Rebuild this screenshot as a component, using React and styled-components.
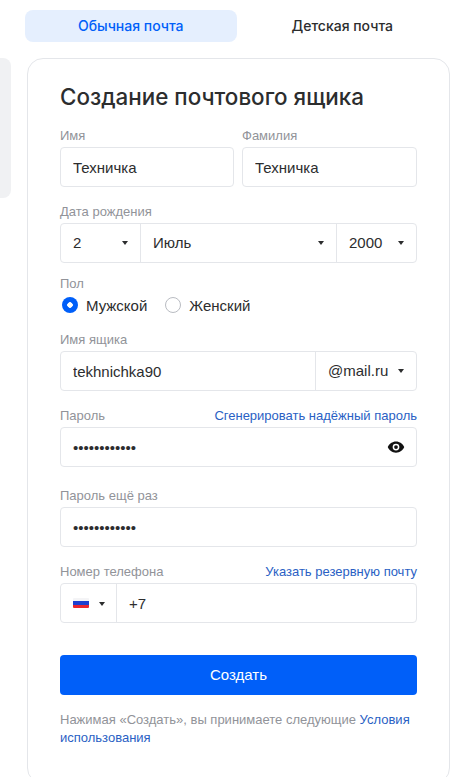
import styled, { createGlobalStyle } from 'styled-components';

const Global = createGlobalStyle`
  html, body { margin: 0; padding: 0; background: #fff; }
  body { font-family: "Liberation Sans", Arial, sans-serif; color: #2c2d2e; overflow: hidden; }
  * { box-sizing: border-box; }
`;

const Page = styled.div`
  width: 473px;
  height: 777px;
  overflow: hidden;
  padding-top: 10px;
`;

const Tabs = styled.div`
  display: flex;
  margin-left: 25px;
  width: 423px;
  height: 32px;
`;

const Tab = styled.div`
  flex: 1;
  display: flex;
  align-items: center;
  justify-content: center;
  padding-bottom: 2px;
  border-radius: 8px;
  font-family: Inter, "Noto Sans", sans-serif;
  font-size: 14px;
  font-weight: 500;
  background: ${({ $active }) => ($active ? '#e5effe' : 'transparent')};
  color: ${({ $active }) => ($active ? '#005ff9' : '#2c2d2e')};
`;

const Body = styled.div`
  display: flex;
  margin-top: 16px;
`;

const SideStub = styled.div`
  flex: none;
  width: 11px;
  height: 140px;
  background: #f0f1f3;
  border-radius: 0 8px 8px 0;
`;

const Card = styled.div`
  flex: none;
  width: 423px;
  height: 726px;
  margin-left: 16px;
  padding: 24px 32px 0;
  border: 1px solid #e4e6ea;
  border-radius: 16px;
`;

const Title = styled.h1`
  margin: 0 0 16px;
  font-family: Inter, "Noto Sans", sans-serif;
  font-size: 22.4px;
  line-height: 28px;
  font-weight: 500;
  color: #2c2d2e;
`;

const Row = styled.div`
  display: grid;
  grid-template-columns: 174px 1fr;
  gap: 8px;
`;

const Field = styled.div`
  min-width: 0;
  margin-bottom: ${({ $gap }) => $gap ?? 16}px;
`;

const LabelRow = styled.div`
  display: flex;
  justify-content: space-between;
  align-items: center;
  height: 16px;
  padding-top: 2px;
  margin-bottom: 4px;
  font-size: 13px;
  line-height: 16px;
`;

const Label = styled.span`
  color: #919399;
`;

const TextLink = styled.a`
  color: #2a5fc4;
  font-size: 13px;
`;

const Control = styled.div`
  display: flex;
  align-items: center;
  height: 40px;
  background: #fff;
  border: 1px solid #e4e6ea;
  border-radius: 4px;
`;

const Input = styled.input`
  flex: 1;
  width: 100%;
  min-width: 0;
  height: 100%;
  padding: 0 12px;
  border: 0;
  outline: 0;
  background: transparent;
  font-family: "Liberation Sans", Arial, sans-serif;
  font-size: 15px;
  color: #2c2d2e;
`;

const Select = styled.div`
  flex: ${({ $grow }) => ($grow ? 1 : 'none')};
  width: ${({ $width }) => ($width ? `${$width}px` : 'auto')};
  height: 100%;
  display: flex;
  align-items: center;
  justify-content: space-between;
  padding: 0 12px 2px;
  font-size: 15px;
  border-left: ${({ $first }) => ($first ? '0' : '1px solid #e4e6ea')};
`;

const Caret = styled.span`
  flex: none;
  width: 0;
  height: 0;
  margin-top: 2px;
  border-left: 3.5px solid transparent;
  border-right: 3.5px solid transparent;
  border-top: 4.5px solid #2c2d2e;
`;

const GenderLabel = styled(LabelRow)`
  margin-bottom: 4px;
`;

const Radios = styled.div`
  display: flex;
  align-items: center;
  height: 20px;
  padding-left: 2px;
  gap: 18px;
`;

const RadioItem = styled.label`
  display: flex;
  align-items: center;
  gap: 8px;
  font-size: 15px;
  color: #2c2d2e;
`;

const RadioMark = styled.span`
  width: 16px;
  height: 16px;
  border-radius: 50%;
  background: ${({ $checked }) => ($checked ? 'radial-gradient(circle, #fff 0 2.5px, #005ff9 3px)' : '#fff')};
  border: ${({ $checked }) => ($checked ? '0' : '1px solid #b9bcc2')};
`;

const EyeButton = styled.span`
  flex: none;
  display: flex;
  margin-right: 11px;
`;

const Flag = styled.span`
  width: 16px;
  height: 10px;
  border-radius: 1px;
  background: linear-gradient(#f4f4f6 0 33%, #1c3fd0 33% 66%, #e8262e 66%);
`;

const PhoneCode = styled.div`
  flex: none;
  width: 56px;
  height: 100%;
  display: flex;
  align-items: center;
  gap: 10px;
  padding-left: 12px;
  border-right: 1px solid #e4e6ea;
`;

const SubmitButton = styled.button`
  display: block;
  width: 100%;
  height: 40px;
  margin-top: 32px;
  padding: 0 0 2px;
  border: 0;
  border-radius: 4px;
  background: #005ff9;
  color: #fff;
  font-family: "Liberation Sans", Arial, sans-serif;
  font-size: 15px;
`;

const Terms = styled.p`
  margin: 16px 0 0;
  font-size: 13px;
  line-height: 18px;
  color: #919399;
`;

function EyeIcon() {
  return (
    <svg width="18" height="18" viewBox="0 0 24 24" fill="#111">
      <path d="M12 4.500C7 4.500 2.800 7.600 1 12c1.800 4.400 6 7.500 11 7.500s9.200-3.100 11-7.500c-1.800-4.400-6-7.500-11-7.500zm0 12a4.500 4.500 0 1 1 0-9 4.500 4.500 0 0 1 0 9zm0-7a2.500 2.500 0 1 0 0 5 2.500 2.500 0 0 0 0-5z" />
    </svg>
  );
}

export default function App() {
  return (
    <Page>
      <Global />
      <Tabs>
        <Tab $active>Обычная почта</Tab>
        <Tab>Детская почта</Tab>
      </Tabs>
      <Body>
        <SideStub />
        <Card>
          <Title>Создание почтового ящика</Title>
          <Row>
            <Field>
              <LabelRow><Label>Имя</Label></LabelRow>
              <Control><Input readOnly value="Техничка" /></Control>
            </Field>
            <Field>
              <LabelRow><Label>Фамилия</Label></LabelRow>
              <Control><Input readOnly value="Техничка" /></Control>
            </Field>
          </Row>
          <Field $gap={12}>
            <LabelRow><Label>Дата рождения</Label></LabelRow>
            <Control>
              <Select $first $width={79}>2<Caret /></Select>
              <Select $grow>Июль<Caret /></Select>
              <Select $width={80}>2000<Caret /></Select>
            </Control>
          </Field>
          <Field $gap={16}>
            <GenderLabel><Label>Пол</Label></GenderLabel>
            <Radios>
              <RadioItem><RadioMark $checked />Мужской</RadioItem>
              <RadioItem><RadioMark />Женский</RadioItem>
            </Radios>
          </Field>
          <Field $gap={16}>
            <LabelRow><Label>Имя ящика</Label></LabelRow>
            <Control>
              <Input readOnly value="tekhnichka90" />
              <Select $width={101}>@mail.ru<Caret /></Select>
            </Control>
          </Field>
          <Field $gap={20}>
            <LabelRow><Label>Пароль</Label><TextLink>Сгенерировать надёжный пароль</TextLink></LabelRow>
            <Control>
              <Input readOnly type="password" value="tekhnichka90" />
              <EyeButton><EyeIcon /></EyeButton>
            </Control>
          </Field>
          <Field $gap={16}>
            <LabelRow><Label>Пароль ещё раз</Label></LabelRow>
            <Control><Input readOnly type="password" value="tekhnichka90" /></Control>
          </Field>
          <Field $gap={0}>
            <LabelRow><Label>Номер телефона</Label><TextLink>Указать резервную почту</TextLink></LabelRow>
            <Control>
              <PhoneCode><Flag /><Caret /></PhoneCode>
              <Input readOnly value="+7" />
            </Control>
          </Field>
          <SubmitButton type="button">Создать</SubmitButton>
          <Terms>
            Нажимая «Создать», вы принимаете следующие <TextLink>Условия</TextLink> <TextLink>использования</TextLink>
          </Terms>
        </Card>
      </Body>
    </Page>
  );
}
